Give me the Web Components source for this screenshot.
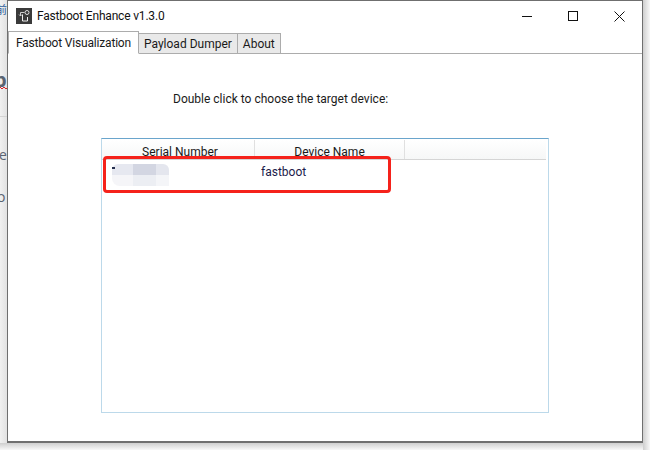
<!DOCTYPE html>
<html>
<head>
<meta charset="utf-8">
<title>Fastboot Enhance</title>
<style>
  html, body { margin: 0; height: 100%; }
  body {
    background: #fff;
    font-family: Roboto, "Liberation Sans", sans-serif;
    font-size: 12px;
    color: #1a1a1a;
    overflow: hidden;
  }
</style>
</head>
<body>
<desktop-backdrop>
  <app-window title="Fastboot Enhance v1.3.0">
    <tab-strip>
      <tab-button active>Fastboot Visualization</tab-button>
      <tab-button>Payload Dumper</tab-button>
      <tab-button>About</tab-button>
    </tab-strip>
    <device-panel></device-panel>
  </app-window>
</desktop-backdrop>

<script>
class DesktopBackdrop extends HTMLElement {
  constructor () {
    super()
    this.attachShadow({ mode: 'open' })
  }

  connectedCallback () {
    this.shadowRoot.innerHTML = `
    <style>
      :host {
        display: grid;
        grid-template-columns: 7px 636px 7px;
        grid-template-rows: 443px 7px;
        width: 650px;
        height: 450px;
        background: #fff;
        position: relative;
      }
      .behind {
        grid-column: 1;
        grid-row: 1 / 3;
        background: linear-gradient(90deg, #f1f1f1, #e2e2e2);
        overflow: hidden;
        font-family: "Open Sans", "Liberation Sans", sans-serif;
        color: #5a6472;
      }
      .shade-r { grid-column: 3; grid-row: 1 / 3; background: linear-gradient(90deg, #cfcfcf, #f8f8f8); }
      .shade-b { grid-column: 1 / 3; grid-row: 2; background: linear-gradient(#cfcfcf, #f8f8f8); }
      .glyph { position: absolute; white-space: nowrap; }
      .rule { position: absolute; left: 0; width: 7px; top: 116px; height: 1px; background: #d4d4d4; }
      .squiggle { position: absolute; left: 0; top: 86px; }
    </style>
    <div class="behind">
      <span class="glyph" style="top:66px;font-size:20px;font-weight:700;left:-6px">p</span>
      <svg class="squiggle" width="7" height="4" viewBox="0 0 7 4"><path d="M0 1l2 2 2-2 2 2 1-1" fill="none" stroke="#e02020"/></svg>
      <div class="rule"></div>
      <span class="glyph" style="top:145px;font-size:14px;left:-1px">e</span>
      <span class="glyph" style="top:187px;font-size:14px;left:-3px">o</span>
      <span class="glyph" style="top:1px;font-size:11px;left:-4px;font-family:'Noto Sans CJK SC',sans-serif;color:#2f5d9b">前</span>
    </div>
    <slot></slot>
    <div class="shade-r"></div>
    <div class="shade-b"></div>
    `
  }
}

class AppWindow extends HTMLElement {
  constructor () {
    super()
    this.attachShadow({ mode: 'open' })
  }

  connectedCallback () {
    this.shadowRoot.innerHTML = `
    <style>
      :host {
        display: flex;
        flex-direction: column;
        grid-column: 2;
        grid-row: 1;
        box-sizing: border-box;
        background: #fff;
        border: 1px solid #6f6f6f;
        border-bottom-width: 2px;
        min-height: 0;
      }
      .titlebar {
        display: flex;
        align-items: center;
        height: 30px;
        padding-left: 8px;
        flex: none;
      }
      .appicon { margin-right: 5px; flex: none; }
      .title { flex: 1; font-size: 12px; color: #111; letter-spacing: -.18px; }
      .ctl { width: 46px; height: 30px; display: flex; align-items: center; justify-content: center; }
    </style>
    <div class="titlebar">
      <svg class="appicon" width="16" height="16" viewBox="0 0 16 16">
        <rect width="16" height="16" fill="#3a3a3a"/>
        <path d="M6.5 6.5v6.5h5V9" fill="none" stroke="#eee"/>
        <circle cx="11" cy="4.5" r="2" fill="none" stroke="#ddd"/>
        <path d="M8.5 4.5H4.5v3.5M3 6.5l1.5 1.5L6 6.5" fill="none" stroke="#ccc"/>
      </svg>
      <span class="title">${this.getAttribute('title')}</span>
      <span class="ctl"><svg width="11" height="11"><path d="M0 5.5h10" stroke="#111"/></svg></span>
      <span class="ctl"><svg width="11" height="11"><rect x=".5" y=".5" width="9" height="9" fill="none" stroke="#111"/></svg></span>
      <span class="ctl"><svg width="11" height="11"><path d="M.5 .5l10 10M10.5 .5l-10 10" stroke="#111"/></svg></span>
    </div>
    <slot></slot>
    `
  }
}

class TabStrip extends HTMLElement {
  constructor () {
    super()
    this.attachShadow({ mode: 'open' })
  }

  connectedCallback () {
    this.shadowRoot.innerHTML = `
    <style>
      :host {
        display: flex;
        align-items: flex-end;
        flex: none;
        height: 22px;
        border-bottom: 1px solid #acacac;
      }
    </style>
    <slot></slot>
    `
  }
}

class TabButton extends HTMLElement {
  constructor () {
    super()
    this.attachShadow({ mode: 'open' })
  }

  connectedCallback () {
    this.shadowRoot.innerHTML = `
    <style>
      :host {
        display: block;
        box-sizing: border-box;
        height: 21px;
        line-height: 20px;
        padding: 0 5px;
        margin-bottom: -1px;
        margin-right: -1px;
        font-size: 12px;
        color: #1a1a1a;
        background: #e9e9e9;
        border: 1px solid #acacac;
        white-space: nowrap;
      }
      :host([active]) {
        height: 23px;
        line-height: 22px;
        background: #fff;
        border-bottom-color: #fff;
        padding: 0 7px;
        letter-spacing: -.18px;
        position: relative;
        z-index: 1;
      }
    </style>
    <slot></slot>
    `
  }
}

class DevicePanel extends HTMLElement {
  constructor () {
    super()
    this.attachShadow({ mode: 'open' })
  }

  connectedCallback () {
    this.shadowRoot.innerHTML = `
    <style>
      :host {
        display: flex;
        flex-direction: column;
        flex: 1;
        min-height: 0;
        padding: 37px 93px 28px 93px;
      }
      .hint { padding-left: 72px; font-size: 12px; height: 47px; line-height: 16px; color: #1a1a1a; }
      .list {
        flex: 1;
        position: relative;
        border: 1px solid #bcd9ea;
        border-top-color: #6aa5cc;
        display: flex;
        flex-direction: column;
      }
      .head {
        display: flex;
        height: 19px;
        margin: 1px 2px 0 0;
        border-bottom: 1px solid #d5d5d5;
        background: linear-gradient(#fff, #f6f7f7);
      }
      .col { box-sizing: border-box; text-align: center; line-height: 24px; font-size: 12px; border-right: 1px solid #e0e0e0; overflow: hidden; }
      .col.first { width: 153px; padding-left: 4px; }
      .col.second { width: 150px; }
      .row { display: flex; height: 25px; line-height: 25px; color: #1b1b4a; font-size: 12px; }
      .serial { width: 153px; position: relative; }
      .name { width: 150px; padding-left: 6px; }
      .blur {
        position: absolute; left: 10px; top: 4px; width: 57px; height: 22px;
        background:
          linear-gradient(90deg, #e6e8f0 0 37%, #d3d6e2 37% 78%, #e4e6ee 78% 100%) top / 100% 50% no-repeat,
          linear-gradient(90deg, #f5f5f8 0 37%, #eceef3 37% 78%, #f4f5f8 78% 100%) bottom / 100% 50% no-repeat;
        border-radius: 6px 6px 0 8px;
      }
      .tick { position: absolute; left: 10px; top: 7px; width: 3px; height: 2px; background: #26304f; }
      .mark {
        position: absolute;
        left: 1px;
        top: 17px;
        width: 288px;
        height: 37px;
        box-sizing: border-box;
        border: 3px solid #f5221b;
        border-radius: 4px;
      }
    </style>
    <div class="hint">Double click to choose the target device:</div>
    <div class="list">
      <div class="head">
        <div class="col first">Serial Number</div>
        <div class="col second">Device Name</div>
      </div>
      <div class="row">
        <div class="serial"><div class="blur"></div><div class="tick"></div></div>
        <div class="name">fastboot</div>
      </div>
      <div class="mark"></div>
    </div>
    `
  }
}

customElements.define('desktop-backdrop', DesktopBackdrop)
customElements.define('app-window', AppWindow)
customElements.define('tab-strip', TabStrip)
customElements.define('tab-button', TabButton)
customElements.define('device-panel', DevicePanel)
</script>
</body>
</html>
